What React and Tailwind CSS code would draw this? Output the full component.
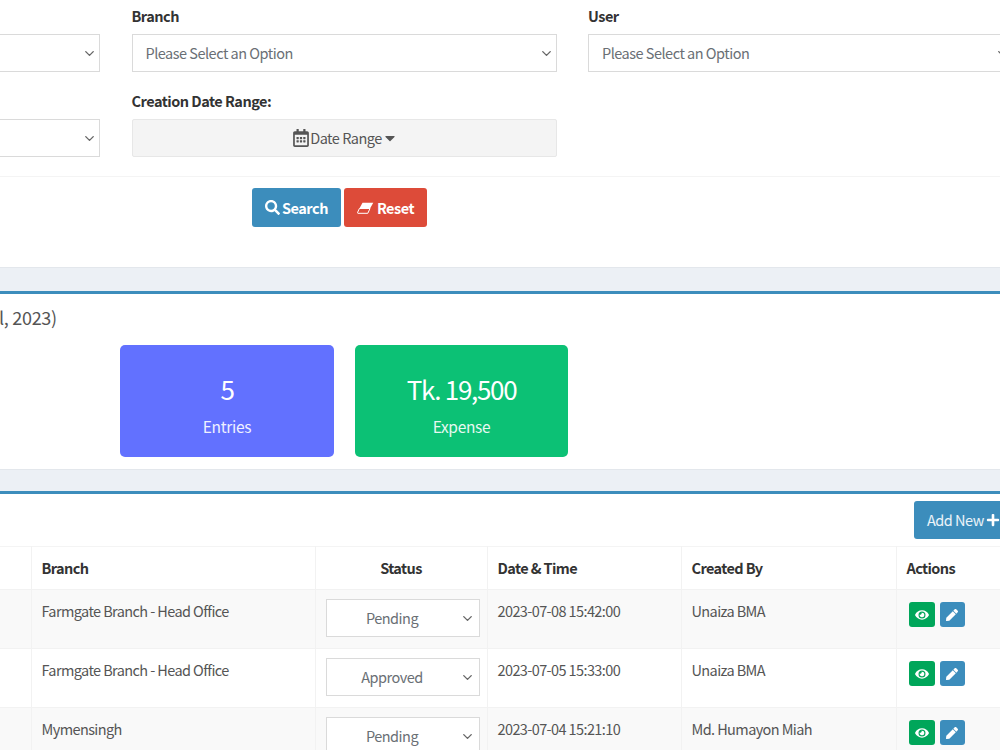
import { ChevronDown } from 'lucide-react'
import { FaRegCalendarAlt, FaCaretDown, FaSearch, FaPlus, FaEye, FaPen } from 'react-icons/fa'

const rows = [
  { branch: 'Farmgate Branch - Head Office', status: 'Pending', date: '2023-07-08 15:42:00', by: 'Unaiza BMA' },
  { branch: 'Farmgate Branch - Head Office', status: 'Approved', date: '2023-07-05 15:33:00', by: 'Unaiza BMA' },
  { branch: 'Mymensingh', status: 'Pending', date: '2023-07-04 15:21:10', by: 'Md. Humayon Miah' },
]

function Select({ value, className = '' }) {
  return (
    <div className={`relative ${className}`}>
      <select
        defaultValue={value}
        className="w-full h-[38px] appearance-none bg-white border border-[#dadada] pl-[13px] pr-[34px] text-[14.5px] tracking-[-0.5px] text-[#6a6f75] outline-none"
      >
        <option value={value}>{value}</option>
      </select>
      <ChevronDown size={15} strokeWidth={2.2} className="absolute right-[3px] top-[12px] text-[#666] pointer-events-none" />
    </div>
  )
}

function Field({ label, children }) {
  return (
    <div>
      <label className="block h-[20px] mb-[8px] leading-[20px] text-[14.5px] font-bold text-[#333]">{label}</label>
      {children}
    </div>
  )
}

function StatCard({ value, label, color, width }) {
  return (
    <div className={`${width} h-[112px] rounded-[5px] ${color} text-white flex flex-col items-center pt-[26px]`}>
      <div className="text-[26px] tracking-[-1.3px] leading-[36px]">{value}</div>
      <div className="mt-[8px] text-[15.5px] tracking-[-0.3px] leading-[22px] opacity-90">{label}</div>
    </div>
  )
}

function Th({ children, className = 'text-left' }) {
  return <th className={`h-[43px] px-[10px] border-r border-[#f2f2f2] text-[14.5px] tracking-[-0.6px] font-bold text-[#333] ${className}`}>{children}</th>
}

function Td({ children, className = 'px-[10px]' }) {
  return <td className={`pt-[9px] pb-[11px] align-top border-r border-[#f2f2f2] text-[14.5px] tracking-[-0.6px] leading-[24px] text-[#555] ${className}`}>{children}</td>
}

export default function App() {
  return (
    <div className="w-[1000px] h-[750px] overflow-hidden bg-[#ecf0f5] tracking-[-0.5px] font-['Noto_Sans_CJK_SC',sans-serif]">
      {/* filters */}
      <div className="h-[268px] bg-white border-b border-[#e3e7ec]">
        <div className="pt-[6px] -ml-[325px] w-[1339px] grid grid-cols-[425px_425px_425px] gap-x-[31.5px] gap-y-[19px]">
          <Field label=""><Select value="" /></Field>
          <Field label="Branch"><Select value="Please Select an Option" /></Field>
          <Field label="User"><Select value="Please Select an Option" /></Field>
          <Field label=""><Select value="" /></Field>
          <Field label="Creation Date Range:">
            <button className="w-full h-[38px] pl-[2px] bg-[#f4f4f4] border border-[#e7e7e7] rounded-[2px] flex items-center justify-center text-[14.5px] text-[#555]">
              <FaRegCalendarAlt size={18} />
              <span>Date Range</span>
              <FaCaretDown size={16} />
            </button>
          </Field>
        </div>
        <div className="mt-[19px] border-t border-[#f4f4f4] pt-[11px] pl-[252px] flex gap-[3px]">
          <button className="w-[89px] h-[39px] bg-[#3c8dbc] rounded-[3px] text-white text-[14.5px] font-bold flex items-center justify-center gap-[2px]">
            <FaSearch size={15} /> Search
          </button>
          <button className="w-[83px] h-[39px] bg-[#dd4b39] rounded-[3px] text-white text-[14.5px] font-bold flex items-center justify-center gap-[3px]">
            <svg width="17" height="12" viewBox="0 0 17 12" fill="none">
              <path d="M5.5 .7H16.3L13 6.5H2.4Z" fill="white" />
              <path d="M2.4 6.5H13L10.8 11.3H1Q.3 11.3 .6 10.4Z" stroke="white" strokeWidth="1" />
            </svg>
            Reset
          </button>
        </div>
      </div>

      {/* summary */}
      <div className="mt-[23px] h-[179px] bg-white border-t-[3px] border-[#3c8dbc] border-b border-b-[#e3e7ec]">
        <div className="pt-[11px] -ml-[1px] text-[18px] tracking-[-0.3px] leading-[25px] text-[#555]">l, 2023)</div>
        <div className="mt-[15px] pl-[120px] flex gap-[21px]">
          <StatCard value="5" label="Entries" color="bg-[#6271ff]" width="w-[214px]" />
          <StatCard value="Tk. 19,500" label="Expense" color="bg-[#0cc175]" width="w-[213px]" />
        </div>
      </div>

      {/* expense list */}
      <div className="mt-[21px] bg-white border-t-[3px] border-[#3c8dbc] h-[259px]">
        <div className="h-[52px] pt-[7px] flex justify-end">
          <button className="-mr-[12px] w-[98px] h-[38px] pl-[13px] bg-[#3c8dbc] rounded-[3px] text-white/90 text-[14.5px] flex items-center gap-[2px]">
            Add New <FaPlus size={14} className="text-white" />
          </button>
        </div>
        <table className="table-fixed w-[1016px] border-collapse">
          <colgroup>
            <col className="w-[31px]" />
            <col className="w-[284px]" />
            <col className="w-[172px]" />
            <col className="w-[194px]" />
            <col className="w-[215px]" />
            <col className="w-[120px]" />
          </colgroup>
          <thead>
            <tr className="border-t border-[#f4f4f4]">
              <Th />
              <Th>Branch</Th>
              <Th className="text-center">Status</Th>
              <Th>Date &amp; Time</Th>
              <Th>Created By</Th>
              <Th>Actions</Th>
            </tr>
          </thead>
          <tbody>
            {rows.map((row, i) => (
              <tr key={i} className={`border-t border-[#f2f2f2] ${i % 2 === 0 ? 'bg-[#f9f9f9]' : 'bg-white'}`}>
                <Td />
                <Td>{row.branch}</Td>
                <Td className="pl-[10px] pr-[7px]">
                  <Select value={row.status} className="[&_select]:[text-align-last:center] [&_svg]:right-[5px]" />
                </Td>
                <Td>{row.date}</Td>
                <Td>{row.by}</Td>
                <Td className="pl-[12px] pr-[10px]">
                  <div className="flex gap-[5px] pt-[3px]">
                    <button className="w-[26px] h-[25px] bg-[#00a65a] rounded-[3px] text-white flex items-center justify-center"><FaEye size={14} /></button>
                    <button className="w-[25px] h-[25px] bg-[#3c8dbc] rounded-[3px] text-white flex items-center justify-center"><FaPen size={12} /></button>
                  </div>
                </Td>
              </tr>
            ))}
          </tbody>
        </table>
      </div>
    </div>
  )
}
